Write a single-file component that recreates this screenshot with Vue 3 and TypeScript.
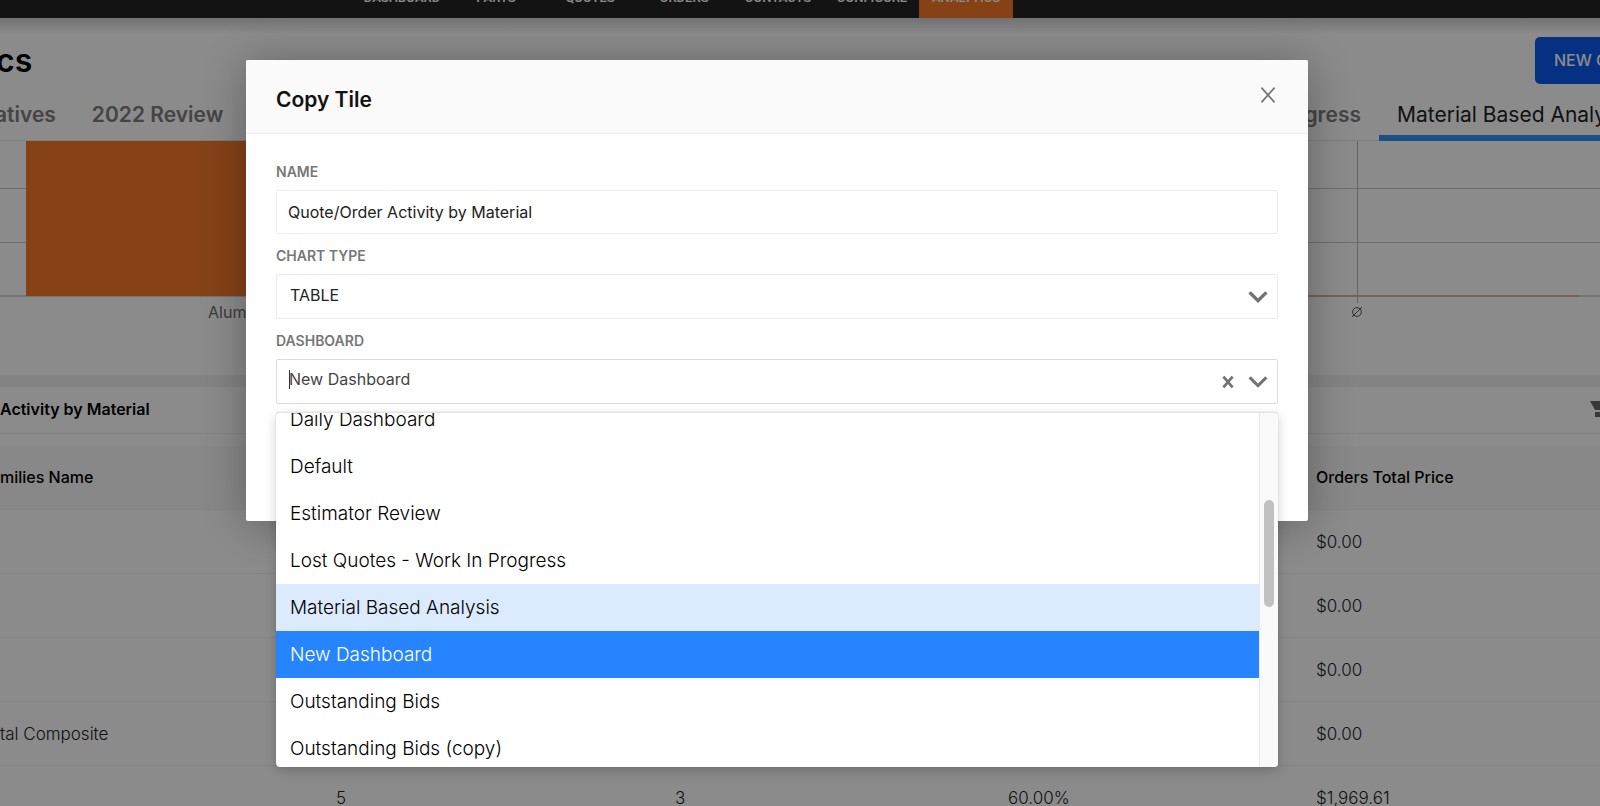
<script setup lang="ts">
import { ref } from 'vue'

interface Row {
  family: string
  quotes: string
  orders: string
  rate: string
  total: string
}

const navItems: string[] = ['DASHBOARD', 'PARTS', 'QUOTES', 'ORDERS', 'CONTACTS', 'CONFIGURE', 'ANALYTICS']

const rows: Row[] = [
  { family: '', quotes: '', orders: '', rate: '', total: '$0.00' },
  { family: '', quotes: '', orders: '', rate: '', total: '$0.00' },
  { family: '', quotes: '', orders: '', rate: '', total: '$0.00' },
  { family: 'tal Composite', quotes: '', orders: '', rate: '', total: '$0.00' },
  { family: '', quotes: '5', orders: '3', rate: '60.00%', total: '$1,969.61' },
]

const dashboards: string[] = [
  'Daily Dashboard',
  'Default',
  'Estimator Review',
  'Lost Quotes - Work In Progress',
  'Material Based Analysis',
  'New Dashboard',
  'Outstanding Bids',
  'Outstanding Bids (copy)',
]

const tileName = ref('Quote/Order Activity by Material')
const chartType = ref('TABLE')
const dashboard = ref('New Dashboard')
const hovered = ref('Material Based Analysis')
</script>

<template>
  <div class="app">
    <div class="page">
      <nav class="nav">
        <a v-for="item in navItems" :key="item" href="#" :class="{ active: item === 'ANALYTICS' }">{{ item }}</a>
      </nav>

      <header class="heading">
        <h1>cs</h1>
        <button type="button" class="new-button">NEW C</button>
      </header>

      <div class="tabs">
        <a href="#" class="tab first">atives</a>
        <a href="#" class="tab">2022 Review</a>
        <a href="#" class="tab push">Progress</a>
        <a href="#" class="tab current">Material Based Analy</a>
      </div>

      <section class="chart">
        <div class="plot">
          <div class="bar"></div>
          <div class="marker"></div>
          <div class="baseline"></div>
        </div>
        <div class="axis">
          <span class="first-label">Aluminum</span>
          <span class="null-label">
            <svg width="12" height="12" viewBox="0 0 12 12" fill="none" stroke="currentColor" aria-label="No material">
              <circle cx="6" cy="6" r="4.4" />
              <path d="M1 11 11 1" />
            </svg>
          </span>
        </div>
      </section>

      <section class="tile">
        <div class="tile-head">
          <h2>Activity by Material</h2>
          <svg class="filter" width="22" height="18" viewBox="0 0 22 18" fill="currentColor" aria-hidden="true">
            <path d="M0 1h22l-5 9H5zM5 12h12v5H5z" />
          </svg>
        </div>
        <table>
          <colgroup>
            <col class="c1" /><col class="c2" /><col class="c3" /><col class="c4" /><col />
          </colgroup>
          <thead>
            <tr>
              <th>milies Name</th>
              <th></th>
              <th></th>
              <th></th>
              <th>Orders Total Price</th>
            </tr>
          </thead>
          <tbody>
            <tr v-for="(row, i) in rows" :key="i">
              <td>{{ row.family }}</td>
              <td>{{ row.quotes }}</td>
              <td>{{ row.orders }}</td>
              <td>{{ row.rate }}</td>
              <td>{{ row.total }}</td>
            </tr>
          </tbody>
        </table>
      </section>
    </div>

    <div class="overlay">
      <form class="modal" role="dialog" aria-labelledby="modal-title" @submit.prevent>
        <div class="modal-head">
          <h2 id="modal-title">Copy Tile</h2>
          <button type="button" class="icon-button" aria-label="Close">
            <svg width="16" height="18" viewBox="0 0 16 18" fill="none" stroke="currentColor" stroke-width="1.7">
              <path d="M1.4 1.6 14.6 16.4M14.6 1.6 1.4 16.4" />
            </svg>
          </button>
        </div>

        <div class="modal-body">
          <label for="tile-name">NAME</label>
          <div class="field name-field">
            <input id="tile-name" v-model="tileName" type="text" />
          </div>

          <label for="chart-type">CHART TYPE</label>
          <div class="field select-field">
            <select id="chart-type" v-model="chartType">
              <option>TABLE</option>
            </select>
            <svg class="chevron" width="20" height="14" viewBox="0 0 20 14" fill="none" stroke="currentColor" stroke-width="3.4">
              <path d="M1.6 2.4 10 10.6 18.4 2.4" />
            </svg>
          </div>

          <label for="dashboard">DASHBOARD</label>
          <div class="field combo-field">
            <span class="caret"></span>
            <input id="dashboard" v-model="dashboard" type="text" role="combobox" aria-expanded="true" aria-controls="dashboard-list" />
            <button type="button" class="icon-button clear" aria-label="Clear">
              <svg width="12" height="14" viewBox="0 0 12 14" fill="none" stroke="currentColor" stroke-width="2.8">
                <path d="M1.4 1.6 10.6 12.4M10.6 1.6 1.4 12.4" />
              </svg>
            </button>
            <button type="button" class="icon-button" aria-label="Toggle list">
              <svg width="20" height="14" viewBox="0 0 20 14" fill="none" stroke="currentColor" stroke-width="3">
                <path d="M1.6 2.4 10 10.6 18.4 2.4" />
              </svg>
            </button>

            <div class="menu">
              <ul id="dashboard-list" role="listbox">
                <li
                  v-for="name in dashboards"
                  :key="name"
                  role="option"
                  :aria-selected="name === dashboard"
                  :class="{ selected: name === dashboard, hovered: name === hovered }"
                  @mouseenter="hovered = name"
                  @click="dashboard = name"
                >
                  {{ name }}
                </li>
              </ul>
              <div class="scroll-track"><div class="scroll-thumb"></div></div>
            </div>
          </div>
        </div>
      </form>
    </div>
  </div>
</template>

<style>
body {
  margin: 0;
  overflow: hidden;
}
</style>

<style scoped>
.app {
  position: relative;
  height: 100vh;
  overflow: hidden;
  font-family: Inter, "Liberation Sans", sans-serif;
  font-size: 16px;
  color: #000;
}

h1,
h2,
ul {
  margin: 0;
  padding: 0;
}

input,
select,
button {
  font: inherit;
  color: inherit;
}

.page {
  background: #fefefe;
}

.nav {
  display: flex;
  height: 18px;
  padding-left: 355px;
  overflow: hidden;
  background: #242424;
}

.nav a {
  display: flex;
  box-sizing: border-box;
  width: 94px;
  height: 18px;
  padding-bottom: 11px;
  align-items: flex-end;
  justify-content: center;
  font: 500 13px/18px Roboto, sans-serif;
  color: #fff;
  text-decoration: none;
}

.nav a.active {
  background: #f4772a;
}

.heading {
  display: flex;
  box-sizing: border-box;
  height: 78px;
  padding-top: 19px;
  justify-content: space-between;
  overflow: hidden;
  background: linear-gradient(#cfcfcf, #fefefe 16px);
}

.heading h1 {
  margin-left: -4px;
  font-size: 32px;
  font-weight: 600;
  line-height: 48px;
}

.new-button {
  width: 65px;
  height: 47px;
  padding: 0 0 2px 19px;
  overflow: hidden;
  border: 0;
  border-radius: 5px 0 0 5px;
  background: #0b59ee;
  color: #fff;
  font-size: 16px;
  font-weight: 500;
  text-align: left;
  white-space: nowrap;
}

.tabs {
  display: flex;
  height: 44px;
  gap: 36px;
  border-bottom: 1px solid #e4e4e4;
  font-size: 21px;
  font-weight: 600;
  line-height: 38px;
}

.tab {
  color: #7d7d7d;
  text-decoration: none;
  white-space: nowrap;
}

.tab.first {
  margin-left: -5px;
}

.tab.push {
  margin-left: auto;
  margin-right: -18px;
}

.tab.current {
  box-sizing: border-box;
  width: 221px;
  height: 45px;
  padding-left: 18px;
  overflow: hidden;
  border-bottom: 6px solid #2e90f5;
  color: #222;
  font-weight: 400;
}

.chart {
  height: 234px;
}

.plot {
  position: relative;
  height: 154px;
  border-bottom: 2px solid #d0d0d0;
  background:
    linear-gradient(#c8c8c8, #c8c8c8) 0 47px / 100% 1px no-repeat,
    linear-gradient(#c8c8c8, #c8c8c8) 0 101px / 100% 1px no-repeat;
}

.bar {
  width: 27%;
  height: 155px;
  margin-left: 26px;
  background: #f4772a;
}

.marker {
  position: absolute;
  top: 0;
  right: 242px;
  width: 1px;
  height: 162px;
  background: #b8b8b8;
}

.baseline {
  position: absolute;
  top: 154px;
  right: 22px;
  width: 30%;
  height: 2px;
  background: #e0ae92;
}

.axis {
  display: flex;
  padding: 3px 237px 0 208px;
  justify-content: space-between;
  align-items: center;
  color: #6c6c6c;
  line-height: 24px;
}

.null-label {
  display: flex;
  color: #555;
}

.tile {
  border-top: 12px solid #efefef;
}

.tile-head {
  display: flex;
  box-sizing: border-box;
  height: 47px;
  padding-bottom: 2px;
  align-items: center;
  justify-content: space-between;
  overflow: hidden;
  border-bottom: 1px solid #ececec;
}

.tile-head h2 {
  font-size: 16px;
  font-weight: 600;
}

.filter {
  margin-right: -12px;
  color: #666;
}

table {
  width: 100%;
  margin-top: 12px;
  border-collapse: separate;
  border-spacing: 0;
  table-layout: fixed;
}

.c1 {
  width: 21%;
}

.c2 {
  width: 339px;
}

.c3 {
  width: 333px;
}

.c4 {
  width: 308px;
}

th,
td {
  box-sizing: border-box;
  height: 64px;
  padding: 0 0 2px;
  border-bottom: 1px solid #efefef;
  text-align: left;
  white-space: nowrap;
}

th {
  background: #f7f7f7;
  font-weight: 500;
}

td {
  padding: 0;
  color: #222;
  font-size: 17px;
  font-weight: 300;
}

.overlay {
  position: absolute;
  inset: 0;
  padding: 60px 292px 0 246px;
  background: rgba(0, 0, 0, 0.45);
}

.modal {
  padding-bottom: 117px;
  border-radius: 2px;
  background: #fff;
  box-shadow: 0 4px 44px rgba(0, 0, 0, 0.3);
}

.modal-head {
  display: flex;
  box-sizing: border-box;
  height: 74px;
  padding: 0 32px 0 30px;
  align-items: center;
  justify-content: space-between;
  border-bottom: 1px solid #f0f0f0;
  border-radius: 2px 2px 0 0;
  background: #fafafa;
}

.modal-head h2 {
  font-size: 21px;
  font-weight: 600;
  line-height: 28px;
  padding-top: 6px;
  color: #111;
}

.modal-head .icon-button {
  padding-bottom: 4px;
}

.icon-button {
  display: flex;
  padding: 0;
  border: 0;
  background: none;
  color: #737373;
}

.modal-body {
  padding: 16px 30px 0;
}

label {
  display: block;
  height: 28px;
  padding-top: 12px;
  color: #777;
  font-size: 14px;
  font-weight: 600;
  line-height: 20px;
}

.field {
  position: relative;
  display: flex;
  box-sizing: border-box;
  height: 45px;
  align-items: center;
  border: 1px solid #ececec;
  border-radius: 2px;
}

.field input,
.field select {
  flex: 1;
  min-width: 0;
  height: 100%;
  box-sizing: border-box;
  padding: 0;
  border: 0;
  outline: 0;
  appearance: none;
  background: none;
  color: #222;
  font-size: 16px;
}

.name-field {
  height: 44px;
}

.field.name-field input {
  padding-left: 11px;
}

.field select {
  padding: 0 10px 4px 13px;
}

.select-field {
  padding-right: 9px;
}

.chevron {
  color: #737373;
  pointer-events: none;
}

.combo-field {
  padding: 0 9px 0 12px;
  gap: 14px;
  border-color: #dcdcdc;
}

.field.combo-field input {
  margin-left: -15px;
  padding-bottom: 6px;
  color: #444;
}

.caret {
  width: 1px;
  height: 19px;
  margin-bottom: 4px;
  background: #333;
}

.menu {
  position: absolute;
  top: calc(100% + 9px);
  left: -1px;
  right: -1px;
  display: flex;
  box-sizing: border-box;
  height: 355px;
  overflow: hidden;
  border-top: 1px solid #e4e4e4;
  border-radius: 4px;
  background: #fff;
  box-shadow: 0 4px 12px rgba(0, 0, 0, 0.18), 0 0 1px rgba(0, 0, 0, 0.3);
}

.menu ul {
  flex: 1;
  margin-top: -17px;
  list-style: none;
  font-size: 19px;
  font-weight: 300;
}

.menu li {
  height: 47px;
  padding-left: 14px;
  line-height: 47px;
}

.menu li.hovered {
  background: #dceafd;
}

.menu li.selected {
  background: #2684ff;
  color: #fff;
}

.scroll-track {
  box-sizing: border-box;
  width: 19px;
  padding: 87px 4px 0;
  border-left: 1px solid #e8e8e8;
  background: #fafafa;
}

.scroll-thumb {
  width: 10px;
  height: 107px;
  border-radius: 5px;
  background: #c1c1c1;
}
</style>
